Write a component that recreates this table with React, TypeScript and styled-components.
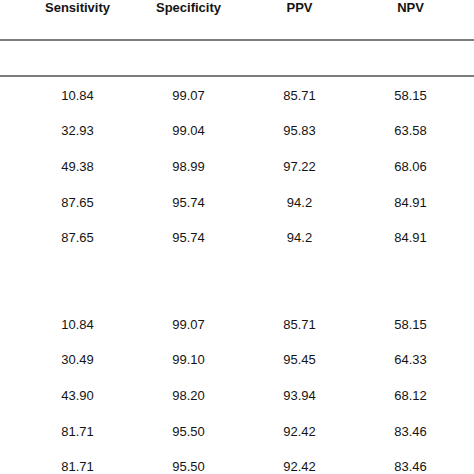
import React from "react";
import styled, { createGlobalStyle } from "styled-components";

const Global = createGlobalStyle`
  html, body { margin: 0; padding: 0; background: #ffffff; }
  body { font-family: "Liberation Sans", Arial, sans-serif; color: #141414; }
`;

const Table = styled.div`
  width: 474px;
  display: flex;
  flex-direction: column;
`;

const GridRow = styled.div<{ $h: number; $bold?: boolean; $align?: string }>`
  display: grid;
  grid-template-columns: 22px repeat(4, 111px) 1fr;
  height: ${(p) => p.$h}px;
  align-items: ${(p) => p.$align ?? "center"};
  font-size: 13px;
  line-height: 16px;
  font-weight: ${(p) => (p.$bold ? 700 : 400)};
`;

const Cell = styled.div`
  text-align: center;
  white-space: nowrap;
`;

const Rule = styled.div`
  height: 2px;
  background: #7d7d7d;
`;

const Blank = styled.div<{ $h: number }>`
  height: ${(p) => p.$h}px;
`;

const Group = styled.div<{ $pt?: number }>`
  display: flex;
  flex-direction: column;
  padding-top: ${(p) => p.$pt ?? 0}px;
`;

const headers = ["Sensitivity", "Specificity", "PPV", "NPV"];

const group1 = [
  ["10.84", "99.07", "85.71", "58.15"],
  ["32.93", "99.04", "95.83", "63.58"],
  ["49.38", "98.99", "97.22", "68.06"],
  ["87.65", "95.74", "94.2", "84.91"],
  ["87.65", "95.74", "94.2", "84.91"],
];

const group2 = [
  ["10.84", "99.07", "85.71", "58.15"],
  ["30.49", "99.10", "95.45", "64.33"],
  ["43.90", "98.20", "93.94", "68.12"],
  ["81.71", "95.50", "92.42", "83.46"],
  ["81.71", "95.50", "92.42", "83.46"],
];

const DataRow = ({ values }: { values: string[] }) => (
  <GridRow $h={35.6}>
    <Cell />
    {values.map((v, i) => (
      <Cell key={i}>{v}</Cell>
    ))}
    <Cell />
  </GridRow>
);

export default function App() {
  return (
    <>
      <Global />
      <Table>
        <GridRow $h={39} $bold $align="start">
          <Cell />
          {headers.map((h) => (
            <Cell key={h}>{h}</Cell>
          ))}
          <Cell />
        </GridRow>
        <Rule />
        <Blank $h={34} />
        <Rule />
        <Group $pt={1}>
          {group1.map((r, i) => (
            <DataRow key={i} values={r} />
          ))}
        </Group>
        <Blank $h={51} />
        <Group>
          {group2.map((r, i) => (
            <DataRow key={i} values={r} />
          ))}
        </Group>
      </Table>
    </>
  );
}
